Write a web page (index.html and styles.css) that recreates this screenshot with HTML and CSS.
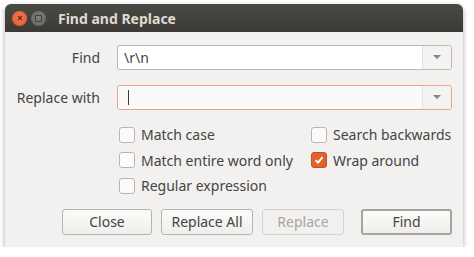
FILE: index.html
```html
<!DOCTYPE html>
<html>
<head>
    <meta charset="UTF-8">
    <title>Find and Replace</title>
    <link rel="stylesheet" href="styles.css">
</head>
<body>
    <div class="window">
        <div class="titlebar">
            <span class="dot close-dot">
                <svg width="8" height="8" viewBox="0 0 8 8"><path d="M2 2 L6 6 M6 2 L2 6" stroke="#7a2a10" stroke-width="1.4"/></svg>
            </span>
            <span class="dot min-dot"><span class="min-box"></span></span>
            <span class="title">Find and Replace</span>
        </div>

        <div class="content">
            <div class="fields">
                <label class="field-label" for="find">Find</label>
                <div class="combo">
                    <input type="text" id="find" value="\r\n">
                    <span class="arrow"></span>
                </div>

                <label class="field-label" for="replace">Replace with</label>
                <div class="combo focused">
                    <div class="fake-input"><span class="caret"></span></div>
                    <span class="arrow"></span>
                </div>
            </div>

            <div class="options">
                <label class="check"><span class="box"></span>Match case</label>
                <label class="check"><span class="box"></span>Search backwards</label>
                <label class="check"><span class="box"></span>Match entire word only</label>
                <label class="check"><span class="box checked">
                    <svg width="12" height="12" viewBox="0 0 12 12"><path d="M2.5 6.2 L5 8.7 L9.6 3.2" fill="none" stroke="#fff" stroke-width="1.8"/></svg>
                </span>Wrap around</label>
                <label class="check"><span class="box"></span>Regular expression</label>
            </div>

            <div class="buttons">
                <button class="btn">Close</button>
                <button class="btn wide">Replace All</button>
                <button class="btn disabled">Replace</button>
                <button class="btn default">Find</button>
            </div>
        </div>
    </div>
</body>
</html>
```

FILE: styles.css
```css
body {
    margin: 0;
    background-color: #ffffff;
    font-family: "Noto Sans", "DejaVu Sans", sans-serif;
    font-size: 14px;
    color: #444444;
}

.window {
    margin: 4px 0 0 5px;
    width: 458px;
    height: 243px;
    background-color: #f2f1f0;
    border-radius: 6px 6px 0 0;
    box-shadow: 0 2px 5px rgba(0, 0, 0, 0.35);
    overflow: hidden;
}

.titlebar {
    height: 28px;
    background: linear-gradient(#4a4944, #3b3a36);
    display: flex;
    align-items: center;
    padding-left: 7px;
}

.dot {
    width: 15px;
    height: 15px;
    border-radius: 50%;
    display: flex;
    align-items: center;
    justify-content: center;
    margin-right: 4px;
}

.close-dot {
    background: radial-gradient(circle at 50% 40%, #f47c54, #e0532a);
}

.min-dot {
    background: radial-gradient(circle at 50% 40%, #807e78, #64625d);
}

.min-box {
    width: 5px;
    height: 5px;
    border: 1px solid #3e3d39;
    border-radius: 1px;
}

.title {
    color: #dfdbd2;
    font-weight: bold;
    font-size: 14px;
    margin-left: 8px;
}

.content {
    padding: 13px 11px 0 0;
}

.fields {
    display: grid;
    grid-template-columns: 95px 335px;
    column-gap: 17px;
    row-gap: 15px;
    align-items: center;
}

.field-label {
    text-align: right;
}

.combo {
    display: flex;
    height: 25px;
    border: 1px solid #bdbab5;
    border-radius: 3px;
    background-color: #ffffff;
    box-sizing: border-box;
}

.combo.focused {
    border-color: #eaa58c;
}

.combo input,
.fake-input {
    flex: 1;
    border: none;
    outline: none;
    background: transparent;
    font: inherit;
    color: #444444;
    padding: 0 0 0 6px;
    border-radius: 3px 0 0 3px;
}

.fake-input {
    display: flex;
    align-items: center;
    background-color: #fafafa;
}

.caret {
    width: 1px;
    height: 15px;
    background-color: #3c3c3c;
    margin-left: 4px;
}

.arrow {
    width: 28px;
    border-left: 1px solid #e6e4e1;
    background-color: #f4f3f2;
    border-radius: 0 3px 3px 0;
    position: relative;
}

.arrow::after {
    content: "";
    position: absolute;
    left: 10px;
    top: 9px;
    border-left: 4px solid transparent;
    border-right: 4px solid transparent;
    border-top: 4px solid #8a8883;
}

.options {
    display: grid;
    grid-template-columns: 192px auto;
    grid-auto-rows: 25.5px;
    margin: 12px 0 0 114px;
}

.check {
    display: flex;
    align-items: center;
}

.box {
    width: 14px;
    height: 14px;
    border: 1px solid #b9b6b1;
    border-radius: 3px;
    background-color: #fbfbfb;
    margin-right: 6px;
    display: flex;
    align-items: center;
    justify-content: center;
}

.box.checked {
    background-color: #e0632f;
    border-color: #c45024;
}

.buttons {
    display: flex;
    margin: 10px 0 0 57px;
}

.btn {
    width: 90px;
    height: 26px;
    margin-right: 9px;
    font: inherit;
    color: #444444;
    border: 1px solid #b7b4af;
    border-radius: 3px;
    background: linear-gradient(#fbfbfa, #efeeec);
}

.btn.wide {
    width: 92px;
}

.btn.disabled {
    width: 82px;
    color: #a8a6a2;
    border-color: #d6d4d0;
    background: #f2f1f0;
    margin-right: 17px;
}

.btn.default {
    width: 91px;
    margin-right: 0;
    border: 2px solid #a7a49f;
}
```
